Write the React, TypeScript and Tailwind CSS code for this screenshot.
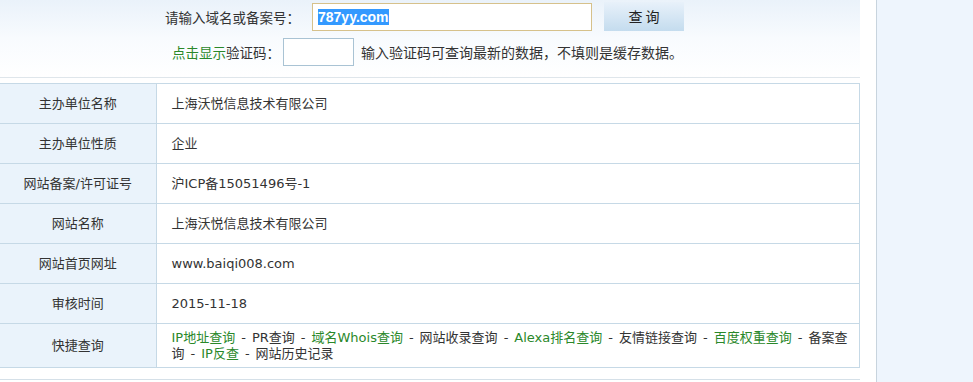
import React from 'react';

const rows: { label: string; value: string }[] = [
  { label: '主办单位名称', value: '上海沃悦信息技术有限公司' },
  { label: '主办单位性质', value: '企业' },
  { label: '网站备案/许可证号', value: '沪ICP备15051496号-1' },
  { label: '网站名称', value: '上海沃悦信息技术有限公司' },
  { label: '网站首页网址', value: 'www.baiqi008.com' },
  { label: '审核时间', value: '2015-11-18' },
];

const Sep = () => <span className="text-[#333] mx-[6px]">-</span>;

const Green = ({ children }: { children: React.ReactNode }) => (
  <span className="text-[#2a882a]">{children}</span>
);

const App = () => {
  return (
    <div className="flex w-[973px] h-[382px] overflow-hidden bg-white text-[#333] font-['DejaVu_Sans','Noto_Sans_CJK_SC',sans-serif]">
      <div className="w-[877px] border-r border-[#c8d4de] shrink-0">
        <div className="w-[860px]">
          {/* search form */}
          <div className="h-[78px] border-b border-[#dfe6eb] bg-gradient-to-b from-[#eaf2fa] via-[#f8fbfe] to-white">
            <div className="flex items-center pt-[2px] pl-[165px] h-[32px]">
              <span className="text-[13.5px] font-['Noto_Sans_CJK_SC',sans-serif]">请输入域名或备案号：</span>
              <div className="ml-[12px] w-[280px] h-[28px] border border-[#d6c18b] bg-white flex items-center pl-[5px]">
                <span className="bg-[#3399ff] text-white font-bold text-[14px] leading-[16px] font-['Liberation_Sans',sans-serif]">
                  787yy.com
                </span>
              </div>
              <button className="ml-[12px] w-[80px] h-[29px] -mt-[1px] bg-gradient-to-b from-[#e8f1fa] to-[#c4dcee] text-[14px] text-[#222] font-['Noto_Sans_CJK_SC',sans-serif]">
                查 询
              </button>
            </div>
            <div className="flex items-center pl-[172px] mt-[6px] text-[14px] font-['Noto_Sans_CJK_SC',sans-serif]">
              <span className="text-[13.5px]">
                <Green>点击显示</Green>验证码：
              </span>
              <div className="ml-[3px] w-[71px] h-[28px] border border-[#a9c3d4] bg-white" />
              <span className="ml-[7px]">输入验证码可查询最新的数据，不填则是缓存数据。</span>
            </div>
          </div>

          {/* record table */}
          <table className="mt-[5px] w-[860px] border-collapse text-[13px]">
            <tbody>
              {rows.map((row, index) => (
                <tr key={index} className="h-[40px]">
                  <td className="w-[156px] bg-[#eaf3fb] text-center border-t border-b border-r border-[#c6d9e6]">
                    {row.label}
                  </td>
                  <td className="pl-[15px] border-t border-b border-r border-[#c6d9e6]">{row.value}</td>
                </tr>
              ))}
              <tr className="h-[44px]">
                <td className="w-[156px] bg-[#eaf3fb] text-center border-b border-r border-[#c6d9e6]">快捷查询</td>
                <td className="pl-[15px] pr-[8px] leading-[16px] border-b border-r border-[#c6d9e6] whitespace-nowrap">
                  <Green>IP地址查询</Green>
                  <Sep />
                  PR查询
                  <Sep />
                  <Green>域名Whois查询</Green>
                  <Sep />
                  网站收录查询
                  <Sep />
                  <Green>Alexa排名查询</Green>
                  <Sep />
                  友情链接查询
                  <Sep />
                  <Green>百度权重查询</Green>
                  <Sep />
                  备案查
                  <br />
                  询<Sep />
                  <Green>IP反查</Green>
                  <Sep />
                  网站历史记录
                </td>
              </tr>
            </tbody>
          </table>
          <div className="mt-[11px] border-t border-[#d5e0e8]" />
        </div>
      </div>
      <div className="flex-1 bg-[#eef5fd]" />
    </div>
  );
};

export default App;
